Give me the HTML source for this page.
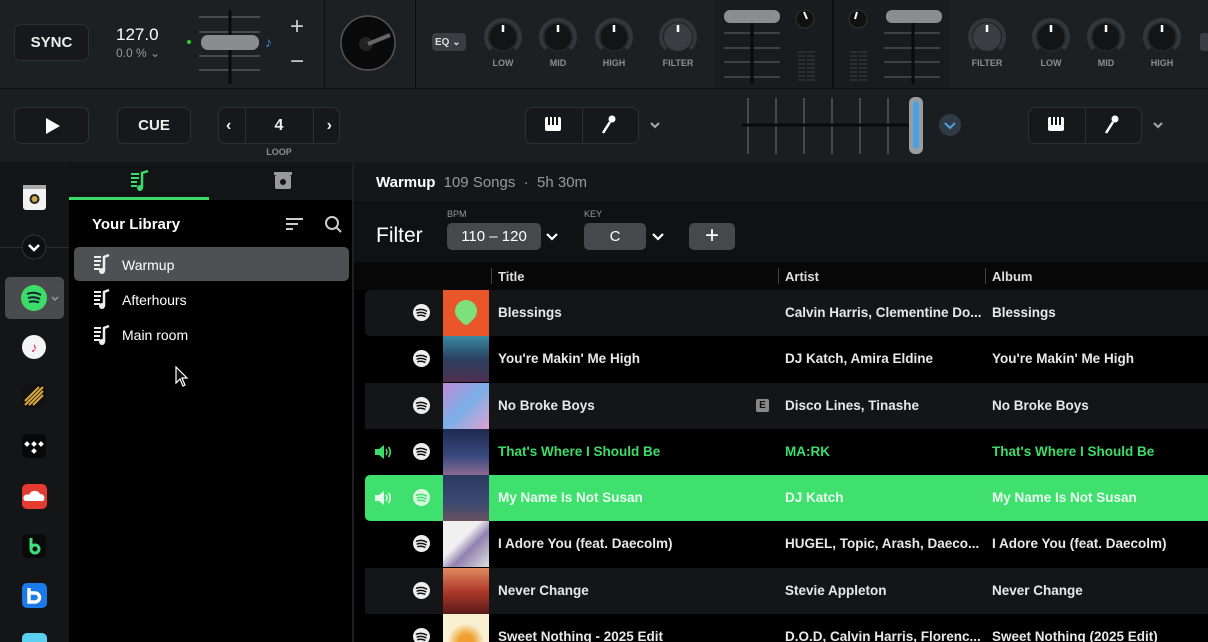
<!DOCTYPE html>
<html style="width:1208px;height:642px;overflow:hidden"><head><meta charset="utf-8"><style>
*{box-sizing:border-box;margin:0;padding:0}
body{width:1208px;height:642px;overflow:hidden;background:#000;font-family:"Liberation Sans",sans-serif;color:#fff;position:relative}
.a{position:absolute}
.btn{position:absolute;background:#16181b;border:1.5px solid #2c2f33;border-radius:7px;display:flex;align-items:center;justify-content:center;font-weight:bold;font-size:15px;color:#eee}
.lbl{position:absolute;font-size:9px;font-weight:bold;color:#8a8d91;transform:translateX(-50%)}
.row{position:absolute;left:365px;width:843px;height:46px;font-size:13.5px;font-weight:bold;color:#e8e8e8}
.row span{position:absolute;top:15px;white-space:nowrap}
.sp{position:absolute;left:48px;top:14px;width:17px;height:17px}
.art{position:absolute;left:78px;top:0;width:46px;height:46px}
.spk{position:absolute;left:9px;top:15px}
</style></head><body>
<svg width="0" height="0" style="position:absolute"><defs>
<g id="spo"><circle cx="8.5" cy="8.5" r="8.5" fill="#eee"/><path d="M3.5 6.2q5-2 10 .8M4.2 9q4.3-1.5 8.6.7M4.8 11.6q3.5-1 7 .6" stroke="#111" stroke-width="1.5" fill="none" stroke-linecap="round"/></g>
<g id="spg"><circle cx="8.5" cy="8.5" r="8.5" fill="#d8f8e0"/><path d="M3.5 6.2q5-2 10 .8M4.2 9q4.3-1.5 8.6.7M4.8 11.6q3.5-1 7 .6" stroke="#3fe06d" stroke-width="1.5" fill="none" stroke-linecap="round"/></g>
</defs></svg>
<!-- top deck -->
<div class="a" style="left:0;top:0;width:1208px;height:88px;background:#1d2023"></div>
<div class="a" style="left:0;top:88px;width:1208px;height:74px;background:#1b1e21;border-top:1px solid #0e0f11"></div>
<div class="a" style="left:324px;top:0;width:1px;height:88px;background:#0c0d0f"></div>
<div class="a" style="left:415px;top:0;width:1px;height:88px;background:#0c0d0f"></div>
<div class="a" style="left:832px;top:0;width:2px;height:88px;background:#0c0d0f"></div>
<div class="a" style="left:715px;top:0;width:117px;height:88px;background:#191b1e"></div>
<div class="a" style="left:834px;top:0;width:115px;height:88px;background:#191b1e"></div>
<div class="btn" style="left:14px;top:24px;width:75px;height:37px">SYNC</div>
<div class="a" style="left:116px;top:25px;font-size:17px">127.0</div>
<div class="a" style="left:116px;top:46px;font-size:12px;color:#999">0.0 % ⌄</div>
<svg class="a" style="left:185px;top:8px" width="100" height="80">
<g stroke="#55595e" stroke-width="1.5"><line x1="14" y1="9" x2="75" y2="9"/><line x1="14" y1="24" x2="75" y2="24"/><line x1="14" y1="48" x2="75" y2="48"/><line x1="14" y1="62" x2="75" y2="62"/></g>
<line x1="45" y1="2" x2="45" y2="76" stroke="#0a0a0a" stroke-width="3"/>
<rect x="16" y="27" width="58" height="15" rx="7" fill="#8a8c8f"/>
<circle cx="4" cy="34" r="2" fill="#3c3"/>
<text x="80" y="39" fill="#3a8fd8" font-size="14" font-style="italic">♪</text>
</svg>
<div class="a" style="left:290px;top:13px;font-size:24px;color:#ccc;font-weight:300">+</div>
<div class="a" style="left:290px;top:48px;font-size:24px;color:#ccc">−</div>
<svg class="a" style="left:338px;top:13px" width="60" height="60"><circle cx="30" cy="30" r="27" fill="#0a0a0a" stroke="#555" stroke-width="1.5"/><circle cx="28" cy="31" r="7" fill="#222"/><line x1="30" y1="31" x2="52" y2="22" stroke="#666" stroke-width="4"/></svg>
<div class="a" style="left:432px;top:33px;width:34px;height:18px;background:#3a3d41;border-radius:4px;font-size:10px;font-weight:bold;padding:4px 3px;color:#ddd">EQ ⌄</div>
<svg class="a" style="left:0;top:0" width="1208" height="88">
<defs><g id="k"><path d="M-12 12 A17 17 0 1 1 12 12" fill="none" stroke="#33363a" stroke-width="4"/><circle r="14" fill="#121416" stroke="#2a2d31"/><line x1="0" y1="-12" x2="0" y2="-5" stroke="#fff" stroke-width="2.5"/></g>
<g id="kf"><path d="M-12 12 A17 17 0 1 1 12 12" fill="none" stroke="#33363a" stroke-width="4"/><circle r="14" fill="#3a3d41"/><line x1="0" y1="-12" x2="0" y2="-5" stroke="#fff" stroke-width="2.5"/></g></defs>
<use href="#k" x="503" y="37"/><use href="#k" x="558" y="37"/><use href="#k" x="614" y="37"/><use href="#kf" x="678" y="37"/>
<use href="#kf" x="987" y="37"/><use href="#k" x="1051" y="37"/><use href="#k" x="1106" y="37"/><use href="#k" x="1162" y="37"/>
<g stroke="#4a4d51" stroke-width="1.5"><line x1="724" y1="33" x2="780" y2="33"/><line x1="724" y1="48" x2="780" y2="48"/><line x1="724" y1="62" x2="780" y2="62"/><line x1="724" y1="77" x2="780" y2="77"/>
<line x1="884" y1="33" x2="940" y2="33"/><line x1="884" y1="48" x2="940" y2="48"/><line x1="884" y1="62" x2="940" y2="62"/><line x1="884" y1="77" x2="940" y2="77"/></g>
<line x1="752" y1="20" x2="752" y2="84" stroke="#0a0a0a" stroke-width="3"/><line x1="913" y1="20" x2="913" y2="84" stroke="#0a0a0a" stroke-width="3"/>
<rect x="724" y="10" width="56" height="13" rx="6" fill="#8a8c8f"/><rect x="886" y="10" width="56" height="13" rx="6" fill="#8a8c8f"/>
<circle cx="805" cy="19" r="9" fill="#111" stroke="#333"/><line x1="804" y1="12" x2="807" y2="19" stroke="#fff" stroke-width="2"/>
<circle cx="858" cy="19" r="9" fill="#111" stroke="#333"/><line x1="857" y1="12" x2="855" y2="19" stroke="#fff" stroke-width="2"/>
<g stroke="#2a2d31" stroke-width="2">
<path d="M798 52H815M798 56H815M798 60H815M798 64H815M798 68H815M798 72H815M798 76H815M798 80H815"/>
<path d="M850 52H867M850 56H867M850 60H867M850 64H867M850 68H867M850 72H867M850 76H867M850 80H867"/></g>
<line x1="806" y1="50" x2="806" y2="82" stroke="#1a1c1f" stroke-width="1.5"/><line x1="858" y1="50" x2="858" y2="82" stroke="#1a1c1f" stroke-width="1.5"/>
<g fill="#8a8d91" font-size="9" font-weight="bold" text-anchor="middle" font-family="Liberation Sans">
<text x="503" y="66">LOW</text><text x="558" y="66">MID</text><text x="614" y="66">HIGH</text><text x="678" y="66">FILTER</text>
<text x="987" y="66">FILTER</text><text x="1051" y="66">LOW</text><text x="1106" y="66">MID</text><text x="1162" y="66">HIGH</text></g>
<rect x="1200" y="33" width="12" height="18" rx="3" fill="#3a3d41"/>
</svg>
<!-- second row -->
<div class="btn" style="left:14px;top:107px;width:75px;height:37px"><svg width="18" height="18"><path d="M3 1L17 9L3 17Z" fill="#fff"/></svg></div>
<div class="btn" style="left:117px;top:107px;width:74px;height:37px">CUE</div>
<div class="btn" style="left:218px;top:107px;width:122px;height:37px;justify-content:space-between;padding:0 7px;font-size:16px"><span>‹</span><span>4</span><span>›</span></div>
<div class="a" style="left:245px;top:108px;width:1px;height:35px;background:#2c2f33"></div>
<div class="a" style="left:313px;top:108px;width:1px;height:35px;background:#2c2f33"></div>
<div class="lbl" style="left:279px;top:147px">LOOP</div>
<div class="btn" style="left:525px;top:107px;width:114px;height:37px"></div>
<div class="btn" style="left:1028px;top:107px;width:114px;height:37px"></div>
<div class="a" style="left:582px;top:108px;width:1px;height:35px;background:#2c2f33"></div>
<div class="a" style="left:1085px;top:108px;width:1px;height:35px;background:#2c2f33"></div>
<svg class="a" style="left:0;top:88px" width="1208" height="74">
<rect x="545" y="29" width="16" height="14" rx="2" fill="#fff"/><path d="M549 29v8M553 29v8M557 29v8" stroke="#111" stroke-width="2"/>
<rect x="1048" y="29" width="16" height="14" rx="2" fill="#fff"/><path d="M1052 29v8M1056 29v8M1060 29v8" stroke="#111" stroke-width="2"/>
<path d="M603 45L610 34" stroke="#fff" stroke-width="2.5"/><circle cx="612" cy="31" r="3.5" fill="#fff"/>
<path d="M1106 45L1113 34" stroke="#fff" stroke-width="2.5"/><circle cx="1115" cy="31" r="3.5" fill="#fff"/>
<path d="M651 35l4 4 4-4M1154 35l4 4 4-4" stroke="#aaa" stroke-width="2" fill="none"/>
<g stroke="#55595e" stroke-width="1.5"><path d="M748 10v56M776 10v56M804 10v56M832 10v56M860 10v56M888 10v56"/></g>
<line x1="742" y1="37" x2="912" y2="37" stroke="#0a0a0a" stroke-width="3"/>
<rect x="909" y="9" width="14" height="57" rx="6" fill="#9a9ca0"/><rect x="913" y="13" width="6" height="48" rx="3" fill="#4aa3e0"/>
<circle cx="950" cy="37" r="11" fill="#2f3a44"/><path d="M945 35l5 5 5-5" stroke="#4aa3e0" stroke-width="2" fill="none"/>
</svg>
<!-- sidebar -->
<div class="a" style="left:0;top:162px;width:69px;height:480px;background:#141517"></div>
<div class="a" style="left:0;top:247px;width:69px;height:1px;background:#2a2c2f"></div>
<svg class="a" style="left:0;top:162px" width="69" height="480">
<rect x="23" y="23" width="23" height="25" rx="3" fill="#f2f2f2"/><rect x="23" y="23" width="23" height="4" fill="#aaa"/><circle cx="34.5" cy="37" r="5" fill="#222"/><circle cx="34.5" cy="37" r="3" fill="#c9a84a"/>
<circle cx="34" cy="85" r="12" fill="#0e0f10" stroke="#333"/><path d="M29 83l5 5 5-5" stroke="#fff" stroke-width="2.5" fill="none"/>
<rect x="5" y="115" width="59" height="42" rx="5" fill="#4a4b4e"/>
<circle cx="34" cy="136" r="13" fill="#3ddc6a"/><path d="M27 132q7-3 14 1M28 136q6-2 12 1M29 140q5-1.5 10 .5" stroke="#123" stroke-width="2" fill="none"/>
<path d="M52 135l3 3 3-3" stroke="#999" stroke-width="1.5" fill="none"/>
<circle cx="34" cy="185" r="12" fill="#f4f4f4"/><text x="34" y="190" fill="#e0305a" font-size="14" text-anchor="middle">♪</text>
<rect x="22" y="222" width="24" height="24" rx="5" fill="#111"/><path d="M25 243L43 225M29 243L43 229M25 239L39 225M33 243L43 233" stroke="#d9a93a" stroke-width="2"/>
<rect x="22" y="272" width="24" height="24" rx="5" fill="#080808"/><g fill="#fff"><rect x="25" y="280" width="4" height="4" transform="rotate(45 27 282)"/><rect x="32" y="280" width="4" height="4" transform="rotate(45 34 282)"/><rect x="39" y="280" width="4" height="4" transform="rotate(45 41 282)"/><rect x="32" y="287" width="4" height="4" transform="rotate(45 34 289)"/></g>
<rect x="22" y="322" width="25" height="25" rx="5" fill="#e53a2f"/><path d="M25 339h18a4 4 0 0 0-3-7a6 6 0 0 0-11 1a3 3 0 0 0-4 6z" fill="#fff"/>
<rect x="22" y="372" width="24" height="24" rx="5" fill="#0a0a0a"/><circle cx="35" cy="387" r="4" fill="none" stroke="#3de07a" stroke-width="3"/><path d="M31 376v10" stroke="#3de07a" stroke-width="3"/>
<rect x="22" y="421" width="25" height="25" rx="5" fill="#1a7be8"/><path d="M29 426v14h6a4 4 0 0 0 0-9h-6" fill="none" stroke="#fff" stroke-width="3.5"/>
<rect x="22" y="471" width="25" height="20" rx="5" fill="#5ad0f0"/>
</svg>
<!-- library panel -->
<div class="a" style="left:69px;top:162px;width:284px;height:38px;background:#131416"></div>
<div class="a" style="left:69px;top:197px;width:140px;height:3px;background:#3ddc6a"></div>
<svg class="a" style="left:69px;top:162px" width="284" height="40">
<path d="M62 12h8M62 16h8M62 20h6M62 24h6" stroke="#3ddc6a" stroke-width="2"/><path d="M73 26V11l6-2" stroke="#3ddc6a" stroke-width="2.5" fill="none"/><circle cx="71" cy="26" r="3" fill="#3ddc6a"/>
<rect x="206" y="13" width="16" height="14" rx="2" fill="#999"/><rect x="205" y="10" width="18" height="3" fill="#999"/><circle cx="214" cy="20" r="3" fill="#131416"/>
</svg>
<div class="a" style="left:352px;top:162px;width:2px;height:480px;background:#1e2023"></div>
<div class="a" style="left:92px;top:216px;font-size:15px;font-weight:bold">Your Library</div>
<svg class="a" style="left:284px;top:214px" width="62" height="22"><path d="M2 5h17M2 10h12M2 15h7" stroke="#ccc" stroke-width="2"/><circle cx="48" cy="9" r="6" stroke="#ccc" stroke-width="2" fill="none"/><path d="M52 13l5 5" stroke="#ccc" stroke-width="2"/></svg>
<div class="a" style="left:74px;top:247px;width:275px;height:34px;background:#4f5053;border-radius:5px"></div>
<svg class="a" style="left:92px;top:254px" width="20" height="100">
<g id="pl"><path d="M2 3h7M2 7h7M2 11h6M2 15h6" stroke="#eee" stroke-width="2"/><path d="M12 17V3l5-2" stroke="#eee" stroke-width="2.5" fill="none"/><circle cx="10" cy="17" r="3" fill="#eee"/></g>
<use href="#pl" y="35"/><use href="#pl" y="71"/></svg>
<div class="a" style="left:122px;top:257px;font-size:14px">Warmup</div>
<div class="a" style="left:122px;top:292px;font-size:14px">Afterhours</div>
<div class="a" style="left:122px;top:327px;font-size:14px">Main room</div>
<svg class="a" style="left:175px;top:366px" width="14" height="22"><path d="M1 1v16l4-4 3 7 2-1-3-7h5z" fill="#111" stroke="#fff" stroke-width="1.2"/></svg>
<!-- right panel -->
<div class="a" style="left:354px;top:162px;width:854px;height:41px;background:#151618;border-bottom:1px solid #0a0a0a"></div>
<div class="a" style="left:376px;top:174px;font-size:15px"><b>Warmup</b> <span style="color:#999;margin-left:4px">109 Songs &nbsp;·&nbsp; 5h 30m</span></div>
<div class="a" style="left:354px;top:203px;width:854px;height:59px;background:#101113"></div>
<div class="a" style="left:376px;top:224px;font-size:21px">Filter</div>
<div class="a" style="left:447px;top:209px;font-size:9px;color:#999">BPM</div>
<div class="a" style="left:584px;top:209px;font-size:9px;color:#999">KEY</div>
<div class="a" style="left:447px;top:223px;width:94px;height:27px;background:#46484c;border-radius:5px;font-size:15px;text-align:center;line-height:27px">110 – 120</div>
<div class="a" style="left:584px;top:223px;width:62px;height:27px;background:#46484c;border-radius:5px;font-size:15px;text-align:center;line-height:27px">C</div>
<div class="a" style="left:689px;top:223px;width:46px;height:27px;background:#46484c;border-radius:5px;font-size:24px;text-align:center;line-height:26px">+</div>
<svg class="a" style="left:545px;top:230px" width="130" height="14"><path d="M2 4l5 5 5-5M108 4l5 5 5-5" stroke="#fff" stroke-width="2.2" fill="none"/></svg>
<div class="a" style="left:354px;top:262px;width:854px;height:28px;background:#070707"></div>
<div class="a" style="left:491px;top:268px;width:1px;height:16px;background:#444"></div>
<div class="a" style="left:778px;top:268px;width:1px;height:16px;background:#444"></div>
<div class="a" style="left:985px;top:268px;width:1px;height:16px;background:#444"></div>
<div class="a" style="left:498px;top:269px;font-size:13px;font-weight:bold;color:#ddd">Title</div>
<div class="a" style="left:785px;top:269px;font-size:13px;font-weight:bold;color:#ddd">Artist</div>
<div class="a" style="left:992px;top:269px;font-size:13px;font-weight:bold;color:#ddd">Album</div>

<div class="row" style="top:290px;background:#141517;border-radius:5px 0 0 5px"><svg class="sp"><use href="#spo"/></svg><div class="art" style="background:#e8562a"><div style="position:absolute;left:12px;top:10px;width:22px;height:22px;background:#7de07a;border-radius:50% 50% 4px 50%;transform:rotate(45deg)"></div></div><span style="left:133px">Blessings</span><span style="left:420px">Calvin Harris, Clementine Do...</span><span style="left:627px">Blessings</span></div>
<div class="row" style="top:336px"><svg class="sp"><use href="#spo"/></svg><div class="art" style="background:linear-gradient(#3a8aa0,#2a4060 50%,#503050)"></div><span style="left:133px">You're Makin' Me High</span><span style="left:420px">DJ Katch, Amira Eldine</span><span style="left:627px">You're Makin' Me High</span></div>
<div class="row" style="top:383px;background:#141517"><svg class="sp"><use href="#spo"/></svg><div class="art" style="background:linear-gradient(135deg,#c08ad8,#7ab0e8,#e0a0d0)"></div><span style="left:133px">No Broke Boys</span><span style="left:391px;width:13px;height:13px;top:16px;background:#888;color:#111;font-size:10px;text-align:center;border-radius:2px;line-height:13px">E</span><span style="left:420px">Disco Lines, Tinashe</span><span style="left:627px">No Broke Boys</span></div>
<div class="row" style="top:429px;color:#3ddc6a"><svg class="spk" width="18" height="16"><path d="M1 5h4l5-4v14l-5-4H1z" fill="#3ddc6a"/><path d="M12 5q2 3 0 6M14.5 3q3.5 5 0 10" stroke="#3ddc6a" stroke-width="1.6" fill="none"/></svg><svg class="sp"><use href="#spo"/></svg><div class="art" style="background:linear-gradient(#1e2a50,#3a4a80 60%,#8a6a90)"></div><span style="left:133px">That's Where I Should Be</span><span style="left:420px">MA:RK</span><span style="left:627px">That's Where I Should Be</span></div>
<div class="row" style="top:475px;background:#3fe06d;border-radius:5px 0 0 5px;color:#eafff0"><svg class="spk" width="18" height="16"><path d="M1 5h4l5-4v14l-5-4H1z" fill="#e0fbe8"/><path d="M12 5q2 3 0 6M14.5 3q3.5 5 0 10" stroke="#e0fbe8" stroke-width="1.6" fill="none"/></svg><svg class="sp"><use href="#spg"/></svg><div class="art" style="background:linear-gradient(#2a3a60,#3a4a70 60%,#6a5060)"></div><span style="left:133px">My Name Is Not Susan</span><span style="left:420px">DJ Katch</span><span style="left:627px">My Name Is Not Susan</span></div>
<div class="row" style="top:521px"><svg class="sp"><use href="#spo"/></svg><div class="art" style="background:linear-gradient(135deg,#f0f0f0 40%,#9080b0 60%,#e0e0e0)"></div><span style="left:133px">I Adore You (feat. Daecolm)</span><span style="left:420px">HUGEL, Topic, Arash, Daeco...</span><span style="left:627px">I Adore You (feat. Daecolm)</span></div>
<div class="row" style="top:568px;background:#141517"><svg class="sp"><use href="#spo"/></svg><div class="art" style="background:linear-gradient(#e08a60,#b03a2a 50%,#5a1a1a)"></div><span style="left:133px">Never Change</span><span style="left:420px">Stevie Appleton</span><span style="left:627px">Never Change</span></div>
<div class="row" style="top:614px;height:28px;overflow:hidden"><svg class="sp"><use href="#spo"/></svg><div class="art" style="background:radial-gradient(circle at 50% 60%,#f0a030 20%,#f8f0d0 50%)"></div><span style="left:133px">Sweet Nothing - 2025 Edit</span><span style="left:420px">D.O.D, Calvin Harris, Florenc...</span><span style="left:627px">Sweet Nothing (2025 Edit)</span></div>
</body></html>
